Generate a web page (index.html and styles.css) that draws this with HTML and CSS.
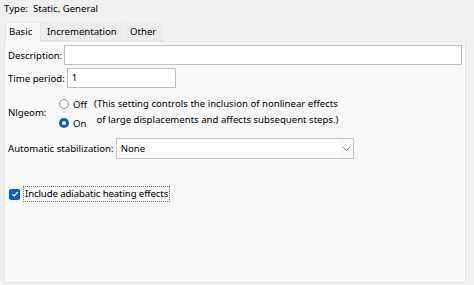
FILE: index.html
```html
<!DOCTYPE html>
<html>
<head>
<meta charset="utf-8">
<link rel="stylesheet" href="styles.css">
</head>
<body>
<div class="win">
  <div class="type"><span class="tlabel">Type:</span><span>Static, General</span></div>
  <div class="tabs">
    <div class="tab active">Basic</div>
    <div class="tab">Incrementation</div>
    <div class="tab">Other</div>
  </div>
  <div class="panel">
    <div class="row desc">
      <span class="lbl">Description:</span>
      <div class="input grow"></div>
    </div>
    <div class="row tp">
      <span class="lbl">Time period:</span>
      <div class="input short">1</div>
    </div>
    <div class="row nl">
      <span class="lbl nllbl">Nlgeom:</span>
      <div class="radios">
        <div class="radio"><span class="rb"></span>Off</div>
        <div class="radio"><span class="rb on"></span>On</div>
      </div>
      <div class="note">(This setting controls the inclusion of nonlinear effects<br>&nbsp;of large displacements and affects subsequent steps.)</div>
    </div>
    <div class="row stab">
      <span class="lbl">Automatic stabilization:</span>
      <div class="select">
        <span>None</span>
        <span class="arrow"><svg width="9" height="6" viewBox="0 0 9 6"><path d="M1 1 L4.5 4.5 L8 1" fill="none" stroke="#8a8a8a" stroke-width="1"/></svg></span>
      </div>
    </div>
    <div class="row chk">
      <span class="cb"><svg width="10" height="10" viewBox="0 0 10 10"><path d="M2.3 5.2 L4.2 7 L7.8 3" fill="none" stroke="#fff" stroke-width="1.2"/></svg></span>
      <span class="cblabel">Include adiabatic heating effects</span>
    </div>
  </div>
</div>
</body>
</html>
```
FILE: styles.css
```css
html, body {
  margin: 0;
  padding: 0;
  background: #f0f0f0;
}
body {
  width: 474px;
  height: 285px;
  overflow: hidden;
  font-family: "Noto Sans", "Open Sans", sans-serif;
  font-size: 9.6px;
  color: #000;
}
.win {
  padding: 0 0 0 4px;
  width: 462px;
}
.type {
  height: 22px;
  line-height: 18px;
  display: flex;
}
.tlabel {
  width: 29px;
}
.tabs {
  display: flex;
  height: 19px;
  padding-left: 1px;
}
.tab {
  background: #ececec;
  padding: 0 0 0 5px;
  line-height: 19px;
  margin-right: 1px;
  box-sizing: border-box;
  border-bottom: 1px solid #e0e0e0;
}
.tab.active {
  background: #f9f9f9;
  border: 1px solid #e3e3e3;
  border-bottom: none;
  line-height: 18px;
  height: 20px;
  width: 36px;
  padding-left: 3px;
  position: relative;
  z-index: 1;
}
.tab:nth-child(2) { width: 82px; }
.tab:nth-child(3) { width: 38px; }
.panel {
  background: #f9f9f9;
  border: 1px solid #e6e6e6;
  height: 242px;
  box-sizing: border-box;
  padding: 3px 3px 0 3px;
}
.row {
  display: flex;
  align-items: center;
}
.lbl {
  margin-right: 2px;
}
.input {
  background: #fff;
  border: 1px solid #bdbdbd;
  height: 20px;
  box-sizing: border-box;
  line-height: 18px;
  padding-left: 4px;
}
.grow { flex: 1; }
.short { width: 109px; }
.desc { height: 20px; }
.tp { margin-top: 3px; height: 20px; }
.nl { margin-top: 7px; height: 36px; align-items: flex-start; }
.nllbl { width: 51px; margin: 0; line-height: 36px; }
.radios {
  display: flex;
  flex-direction: column;
  gap: 5px;
  width: 35px;
  padding-top: 2px;
}
.radio {
  display: flex;
  align-items: center;
  height: 14px;
}
.rb {
  width: 8px;
  height: 8px;
  border: 1px solid #8c8c8c;
  border-radius: 50%;
  margin-right: 4px;
  box-sizing: content-box;
  background: #fff;
}
.rb.on {
  border: 3px solid #0a5fc2;
  width: 4px;
  height: 4px;
}
.note {
  line-height: 16px;
  padding-top: 1px;
}
.stab { margin-top: 7px; height: 21px; }
.select {
  width: 238px;
  height: 21px;
  box-sizing: border-box;
  background: #fff;
  border: 1px solid #c4c4c4;
  display: flex;
  align-items: center;
  justify-content: space-between;
  padding-left: 4px;
}
.arrow {
  width: 12px;
  height: 19px;
  background: #fafafa;
  display: flex;
  align-items: center;
  justify-content: center;
}
.chk { margin-top: 27px; }
.cb {
  width: 11px;
  height: 11px;
  background: #0a5fc2;
  border-radius: 2px;
  display: flex;
  align-items: center;
  justify-content: center;
  margin-left: 1px;
  margin-right: 3px;
}
.cblabel {
  border: 1px dotted #777;
  padding: 0 1px;
  line-height: 14px;
  letter-spacing: -0.1px;
}
```
